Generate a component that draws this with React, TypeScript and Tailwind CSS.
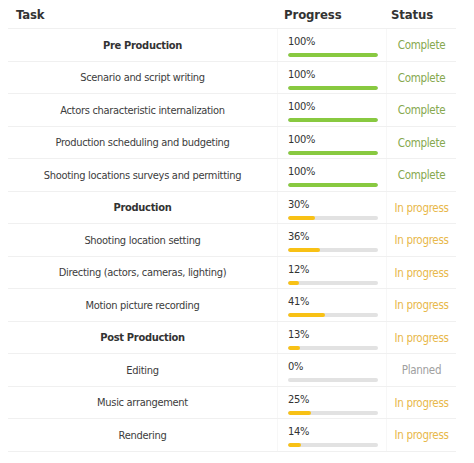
import React from "react";

type Row = { task: string; bold?: boolean; pct: number; status: "Complete" | "In progress" | "Planned" };

const rows: Row[] = [
  { task: "Pre Production", bold: true, pct: 100, status: "Complete" },
  { task: "Scenario and script writing", pct: 100, status: "Complete" },
  { task: "Actors characteristic internalization", pct: 100, status: "Complete" },
  { task: "Production scheduling and budgeting", pct: 100, status: "Complete" },
  { task: "Shooting locations surveys and permitting", pct: 100, status: "Complete" },
  { task: "Production", bold: true, pct: 30, status: "In progress" },
  { task: "Shooting location setting", pct: 36, status: "In progress" },
  { task: "Directing (actors, cameras, lighting)", pct: 12, status: "In progress" },
  { task: "Motion picture recording", pct: 41, status: "In progress" },
  { task: "Post Production", bold: true, pct: 13, status: "In progress" },
  { task: "Editing", pct: 0, status: "Planned" },
  { task: "Music arrangement", pct: 25, status: "In progress" },
  { task: "Rendering", pct: 14, status: "In progress" },
];

const font = { fontFamily: "'DejaVu Sans', sans-serif", fontStretch: "condensed" as const };

export default function App() {
  return (
    <div className="w-[474px] h-[463px] bg-white pl-2" style={font}>
      <div className="w-[448px]">
        <div className="grid grid-cols-[270px_109px_69px] h-[29px] items-center pt-[1px] border-b border-[#f0f0f0] text-[13px] font-bold text-[#333] tracking-[-0.1px]">
          <div className="pl-2">Task</div>
          <div className="pl-[6px]">Progress</div>
          <div className="pl-[4px]">Status</div>
        </div>
        {rows.map((r, i) => (
          <div
            key={i}
            className="grid grid-cols-[270px_109px_69px] h-[32.5px] border-b border-[#f0f0f0] text-[11px] tracking-[-0.3px]"
          >
            <div
              className={`flex items-center justify-center pt-[2px] border-r border-[#f7f7f7] ${
                r.bold ? "font-bold text-[#333]" : "text-[#3c3c3c]"
              }`}
            >
              {r.task}
            </div>
            <div className="flex flex-col pl-[10px] pt-[6px] border-r border-[#f7f7f7]">
              <div className="text-[#333] leading-[13px]">{r.pct}%</div>
              <div className="mt-[5px] h-[4px] w-[90px] rounded-full bg-[#e2e2e2] overflow-hidden">
                <div
                  className={`h-full rounded-full ${r.pct === 100 ? "bg-[#88c940]" : "bg-[#f8c115]"}`}
                  style={{ width: `${r.pct}%` }}
                />
              </div>
            </div>
            <div
              className={`flex items-center justify-center pt-[2px] text-[11.5px] ${
                r.status === "Complete"
                  ? "text-[#86a84e]"
                  : r.status === "Planned"
                  ? "text-[#a0a0a0]"
                  : "text-[#e8b84a]"
              }`}
            >
              {r.status}
            </div>
          </div>
        ))}
      </div>
    </div>
  );
}
